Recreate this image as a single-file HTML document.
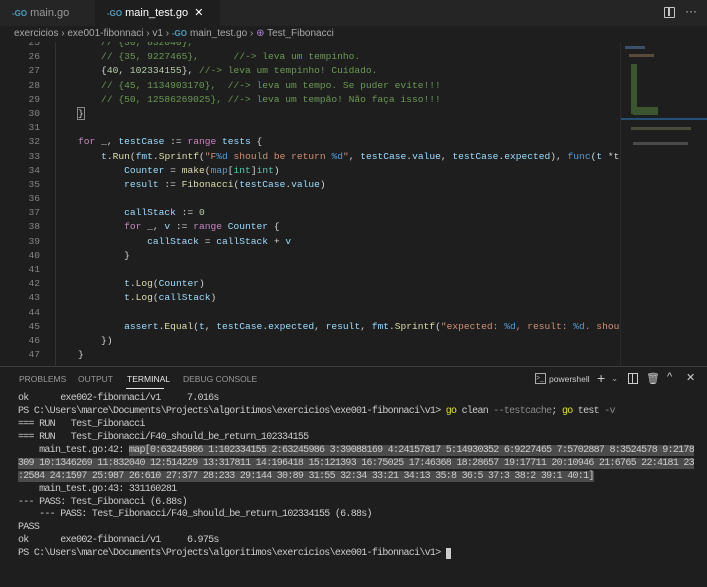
<!DOCTYPE html>
<html><head><meta charset="utf-8"><style>
*{margin:0;padding:0;box-sizing:border-box}
body{width:707px;height:587px;background:#1e1e1e;overflow:hidden;position:relative;font-family:"Liberation Sans",sans-serif;color:#ccc}
.tabs{position:absolute;left:0;top:0;width:707px;height:26px;background:#252526}
.tab{position:absolute;top:0;height:26px;font-size:11px;line-height:26px;padding-left:12px}
.go{color:#519aba;font-size:8px;font-weight:bold;margin-right:3px}
.bc{position:absolute;left:0;top:26px;height:16px;width:620px;font-size:10px;line-height:16px;color:#a9a9a9;padding-left:14px}
.code{position:absolute;left:0;top:42px;width:620px;height:324px;overflow:hidden}
.inner{position:absolute;left:0;top:-6px;font-family:"Liberation Mono",monospace;font-size:9.6px}
.l{height:14.2px;line-height:14.2px;white-space:pre;position:relative}
.n{display:inline-block;width:40px;text-align:right;color:#858585;margin-right:15px}
.c{color:#6a9955}.k{color:#c586c0}.v{color:#9cdcfe}.f{color:#dcdcaa}.s{color:#ce9178}.t{color:#4ec9b0}.b{color:#569cd6}.num{color:#b5cea8}.w{color:#d4d4d4}
.mini{position:absolute;left:620px;top:42px;width:87px;height:324px;background:#1e1e1e;border-left:1px solid #2a2a2a}
.panel{position:absolute;left:0;top:366px;width:707px;height:221px;border-top:1px solid #3c3c3c}
.ptab{position:absolute;top:7px;font-size:8.5px;color:#9a9a9a}
.term{position:absolute;left:18px;top:26px;font-family:"Liberation Mono",monospace;font-size:10px;letter-spacing:-0.72px;color:#cccccc}
.tl{height:12.95px;line-height:12.95px;white-space:pre}
.sel{background:#4b4b4b}
.y{color:#e5e510}.g{color:#8a8a8a}
</style></head><body>
<div class="tabs">
 <div class="tab" style="left:0;width:95px;color:#9a9a9a"><span class="go">-GO</span>main.go</div>
 <div class="tab" style="left:95px;width:125px;background:#1e1e1e;color:#fff"><span class="go">-GO</span>main_test.go &nbsp;✕</div>
 <div style="position:absolute;left:664px;top:7px;width:11px;height:11px;border:1.5px solid #c5c5c5;border-radius:1px"><div style="position:absolute;left:3px;top:0;width:1.5px;height:8px;background:#c5c5c5"></div></div>
 <div style="position:absolute;left:685px;top:4px;font-size:12px;color:#c5c5c5">···</div>
</div>
<div class="bc">exercicios › exe001-fibonnaci › v1 › <span class="go">-GO</span>main_test.go › <span style="color:#b180d7">⊕</span> Test_Fibonacci</div>
<div class="code"><div class="inner">
<div class="l"><span class="n">25</span><span class="c">        // {30, 832040},</span></div>
<div class="l"><span class="n">26</span><span class="c">        // {35, 9227465},      //-&gt; leva um tempinho.</span></div>
<div class="l"><span class="n">27</span><span class="w">        {</span><span class="num">40</span><span class="w">, </span><span class="num">102334155</span><span class="w">}, </span><span class="c">//-&gt; leva um tempinho! Cuidado.</span></div>
<div class="l"><span class="n">28</span><span class="c">        // {45, 1134903170},  //-&gt; leva um tempo. Se puder evite!!!</span></div>
<div class="l"><span class="n">29</span><span class="c">        // {50, 12586269025}, //-&gt; leva um tempão! Não faça isso!!!</span></div>
<div class="l"><span class="n">30</span><span class="w">    </span><span class="w" style="outline:1px solid #888">}</span></div>
<div class="l"><span class="n">31</span></div>
<div class="l"><span class="n">32</span>    <span class="k">for</span><span class="w"> _, </span><span class="v">testCase</span><span class="w"> := </span><span class="k">range</span><span class="v"> tests</span><span class="w"> {</span></div>
<div class="l"><span class="n">33</span>        <span class="v">t</span><span class="w">.</span><span class="f">Run</span><span class="w">(</span><span class="v">fmt</span><span class="w">.</span><span class="f">Sprintf</span><span class="w">(</span><span class="s">"F</span><span class="b">%d</span><span class="s"> should be return </span><span class="b">%d</span><span class="s">"</span><span class="w">, </span><span class="v">testCase</span><span class="w">.</span><span class="v">value</span><span class="w">, </span><span class="v">testCase</span><span class="w">.</span><span class="v">expected</span><span class="w">), </span><span class="b">func</span><span class="w">(</span><span class="v">t</span><span class="w"> *t</span></div>
<div class="l"><span class="n">34</span>            <span class="v">Counter</span><span class="w"> = </span><span class="f">make</span><span class="w">(</span><span class="b">map</span><span class="w">[</span><span class="t">int</span><span class="w">]</span><span class="t">int</span><span class="w">)</span></div>
<div class="l"><span class="n">35</span>            <span class="v">result</span><span class="w"> := </span><span class="f">Fibonacci</span><span class="w">(</span><span class="v">testCase</span><span class="w">.</span><span class="v">value</span><span class="w">)</span></div>
<div class="l"><span class="n">36</span></div>
<div class="l"><span class="n">37</span>            <span class="v">callStack</span><span class="w"> := </span><span class="num">0</span></div>
<div class="l"><span class="n">38</span>            <span class="k">for</span><span class="w"> _, </span><span class="v">v</span><span class="w"> := </span><span class="k">range</span><span class="v"> Counter</span><span class="w"> {</span></div>
<div class="l"><span class="n">39</span>                <span class="v">callStack</span><span class="w"> = </span><span class="v">callStack</span><span class="w"> + </span><span class="v">v</span></div>
<div class="l"><span class="n">40</span><span class="w">            }</span></div>
<div class="l"><span class="n">41</span></div>
<div class="l"><span class="n">42</span>            <span class="v">t</span><span class="w">.</span><span class="f">Log</span><span class="w">(</span><span class="v">Counter</span><span class="w">)</span></div>
<div class="l"><span class="n">43</span>            <span class="v">t</span><span class="w">.</span><span class="f">Log</span><span class="w">(</span><span class="v">callStack</span><span class="w">)</span></div>
<div class="l"><span class="n">44</span></div>
<div class="l"><span class="n">45</span>            <span class="v">assert</span><span class="w">.</span><span class="f">Equal</span><span class="w">(</span><span class="v">t</span><span class="w">, </span><span class="v">testCase</span><span class="w">.</span><span class="v">expected</span><span class="w">, </span><span class="v">result</span><span class="w">, </span><span class="v">fmt</span><span class="w">.</span><span class="f">Sprintf</span><span class="w">(</span><span class="s">"expected: </span><span class="b">%d</span><span class="s">, result: </span><span class="b">%d</span><span class="s">. shou</span></div>
<div class="l"><span class="n">46</span><span class="w">        })</span></div>
<div class="l"><span class="n">47</span><span class="w">    }</span></div>
</div>
<div style="position:absolute;left:55px;top:0;width:1px;height:324px;background:#333"></div>
</div>
<div class="mini">
 <div style="position:absolute;left:4px;top:4px;width:20px;height:3px;background:#3c4f6a"></div>
 <div style="position:absolute;left:8px;top:12px;width:25px;height:3px;background:#5a4a3a"></div>
 <div style="position:absolute;left:10px;top:22px;width:6px;height:50px;background:#3b5530"></div>
 <div style="position:absolute;left:12px;top:65px;width:25px;height:8px;background:#3b5530"></div>
 <div style="position:absolute;left:0;top:76px;width:87px;height:2px;background:#264f78"></div>
 <div style="position:absolute;left:10px;top:85px;width:60px;height:3px;background:#4a4a3a"></div>
 <div style="position:absolute;left:12px;top:100px;width:55px;height:3px;background:#4a4a4a"></div>
</div>
<div class="panel">
 <div class="ptab" style="left:19px">PROBLEMS</div>
 <div class="ptab" style="left:78px">OUTPUT</div>
 <div class="ptab" style="left:127px;color:#e7e7e7">TERMINAL</div>
 <div style="position:absolute;left:126px;top:21px;width:38px;height:1px;background:#e7e7e7"></div>
 <div class="ptab" style="left:183px">DEBUG CONSOLE</div>
 <div style="position:absolute;left:535px;top:6px;width:11px;height:11px;border:1px solid #aaa;font-size:7px;line-height:9px;color:#aaa">&gt;_</div>
 <div class="ptab" style="left:549px;color:#ccc;top:7px">powershell</div>
 <div class="ptab" style="left:597px;top:3px;font-size:14px;color:#ccc">+</div>
 <div class="ptab" style="left:611px;top:6px;color:#aaa">⌄</div>
 <div style="position:absolute;left:628px;top:6px;width:10px;height:11px;border:1.3px solid #ccc"><div style="position:absolute;left:3px;top:0;width:1.3px;height:9px;background:#ccc"></div></div>
 <div class="ptab" style="left:646px;top:5px;font-size:11px;color:#ccc">🗑</div>
 <div class="ptab" style="left:667px;top:4px;font-size:11px;color:#ccc">^</div>
 <div class="ptab" style="left:686px;top:4px;font-size:11px;color:#ccc">✕</div>
 <div class="term">
<div class="tl">ok      exe002-fibonnaci/v1     7.016s</div>
<div class="tl">PS C:\Users\marce\Documents\Projects\algoritimos\exercicios\exe001-fibonnaci\v1&gt; <span class="y">go</span> clean <span class="g">--testcache</span>; <span class="y">go</span> test <span class="g">-v</span></div>
<div class="tl">=== RUN   Test_Fibonacci</div>
<div class="tl">=== RUN   Test_Fibonacci/F40_should_be_return_102334155</div>
<div class="tl">    main_test.go:42: <span class="sel">map[0:63245986 1:102334155 2:63245986 3:39088169 4:24157817 5:14930352 6:9227465 7:5702887 8:3524578 9:2178</span></div>
<div class="tl"><span class="sel">309 10:1346269 11:832040 12:514229 13:317811 14:196418 15:121393 16:75025 17:46368 18:28657 19:17711 20:10946 21:6765 22:4181 23</span></div>
<div class="tl"><span class="sel">:2584 24:1597 25:987 26:610 27:377 28:233 29:144 30:89 31:55 32:34 33:21 34:13 35:8 36:5 37:3 38:2 39:1 40:1]</span></div>
<div class="tl">    main_test.go:43: 331160281</div>
<div class="tl">--- PASS: Test_Fibonacci (6.88s)</div>
<div class="tl">    --- PASS: Test_Fibonacci/F40_should_be_return_102334155 (6.88s)</div>
<div class="tl">PASS</div>
<div class="tl">ok      exe002-fibonnaci/v1     6.975s</div>
<div class="tl">PS C:\Users\marce\Documents\Projects\algoritimos\exercicios\exe001-fibonnaci\v1&gt; <span style="background:#ccc">&nbsp;</span></div>
 </div>
</div>
</body></html>
